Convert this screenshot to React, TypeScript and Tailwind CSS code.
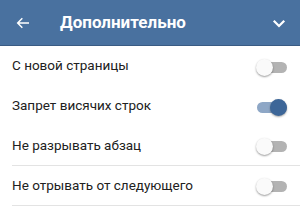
import React, { useState } from 'react';

type Option = {
  label: string;
  on: boolean;
  divider: boolean;
};

const initialOptions: Option[] = [
  { label: 'С новой страницы', on: false, divider: false },
  { label: 'Запрет висячих строк', on: true, divider: false },
  { label: 'Не разрывать абзац', on: false, divider: true },
  { label: 'Не отрывать от следующего', on: false, divider: true },
];

const Toggle = ({ on, onClick }: { on: boolean; onClick: () => void }) => {
  return (
    <button
      type="button"
      onClick={onClick}
      className="relative w-[31px] h-[17px] flex items-center shrink-0"
    >
      <span
        className={
          on
            ? 'absolute left-[1px] right-0 h-[11px] rounded-full bg-[#8ea7c6]'
            : 'absolute left-[1px] right-0 h-[11px] rounded-full bg-[#b3b3b3]'
        }
      />
      {on ? (
        <span className="absolute right-0 w-[17px] h-[17px] rounded-full bg-[#3d6698] shadow-[0_1px_2px_rgba(0,0,0,0.35)]" />
      ) : (
        <span className="absolute left-0 w-[17px] h-[17px] rounded-full bg-[#fafafa] shadow-[0_1px_2px_rgba(0,0,0,0.4)]" />
      )}
    </button>
  );
};

export default function App() {
  const [options, setOptions] = useState(initialOptions);

  return (
    <div
      className="w-[300px] h-[217px] bg-white overflow-hidden flex flex-col"
      style={{ fontFamily: 'Roboto, "Liberation Sans", sans-serif' }}
    >
      <header className="h-[46px] shrink-0 bg-[#49719f] border-b border-[#3a5b83] flex items-center text-white">
        <svg
          className="ml-[15px] w-[16px] h-[16px]"
          viewBox="0 0 24 24"
          fill="none"
          stroke="currentColor"
          strokeWidth="2.2"
        >
          <path d="M21 12H4M11 5l-7 7 7 7" />
        </svg>
        <h1 className="ml-[29px] text-[17px] font-bold leading-none">
          Дополнительно
        </h1>
        <svg
          className="ml-auto mr-[12px] w-[18px] h-[18px]"
          viewBox="0 0 24 24"
          fill="none"
          stroke="currentColor"
          strokeWidth="3"
        >
          <path d="M5 9l7 7 7-7" />
        </svg>
      </header>
      <div className="flex flex-col">
        {options.map((opt, i) => (
          <div
            key={opt.label}
            className={
              opt.divider
                ? 'h-[40px] ml-[12px] flex items-center border-b border-[#e3e3e3]'
                : 'h-[40px] ml-[12px] flex items-center'
            }
          >
            <span className="text-[13.5px] text-[#212121] pb-[1px]">
              {opt.label}
            </span>
            <div className="ml-auto mr-[13px] pt-[2px]">
              <Toggle
                on={opt.on}
                onClick={() =>
                  setOptions((prev) =>
                    prev.map((o, j) => (j === i ? { ...o, on: !o.on } : o)),
                  )
                }
              />
            </div>
          </div>
        ))}
      </div>
    </div>
  );
}
